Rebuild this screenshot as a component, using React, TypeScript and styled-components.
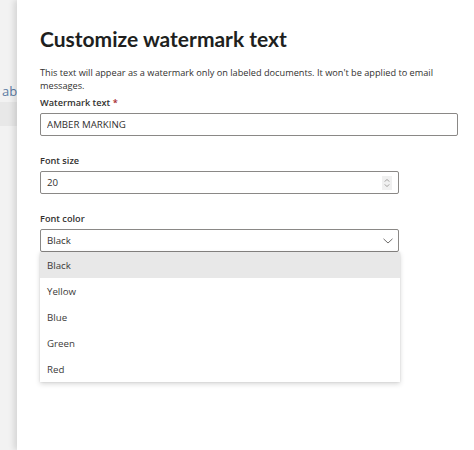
import React, { useState } from "react";
import styled, { createGlobalStyle } from "styled-components";

const GlobalStyle = createGlobalStyle`
    html, body {
        margin: 0;
        padding: 0;
        background: #ffffff;
    }
    body {
        font-family: "Open Sans", "Noto Sans", sans-serif;
        color: #323130;
    }
`;

const COLORS = ["Black", "Yellow", "Blue", "Green", "Red"];

const App = () => {
    const [color, setColor] = useState("Black");

    return (
        <>
            <GlobalStyle />
            <Page>
                <Backdrop>
                    <BackdropLabel>ab</BackdropLabel>
                    <BackdropRow />
                </Backdrop>
                <Panel>
                    <Title>Customize watermark text</Title>
                    <Description>
                        This text will appear as a watermark only on labeled documents. It won't be applied to email
                        messages.
                    </Description>

                    <Field>
                        <Label>
                            Watermark text <Required>*</Required>
                        </Label>
                        <TextBox defaultValue="AMBER MARKING" />
                    </Field>

                    <Field $gap>
                        <Label>Font size</Label>
                        <BoxShell>
                            <BoxValue>20</BoxValue>
                            <Stepper>
                                <svg width="8" height="12" viewBox="0 0 8 12">
                                    <path d="M1.8 4.6 L4 2.4 L6.2 4.6" fill="none" stroke="#8a8886" strokeWidth="0.8" />
                                    <path d="M1.8 7.4 L4 9.6 L6.2 7.4" fill="none" stroke="#8a8886" strokeWidth="0.8" />
                                </svg>
                            </Stepper>
                        </BoxShell>
                    </Field>

                    <Field $gap>
                        <Label>Font color</Label>
                        <DropdownWrap>
                            <BoxShell>
                                <BoxValue>{color}</BoxValue>
                                <Chevron>
                                    <svg width="10" height="6" viewBox="0 0 10 6">
                                        <path d="M0.5 0.8 L5 5 L9.5 0.8" fill="none" stroke="#605e5c" strokeWidth="0.9" />
                                    </svg>
                                </Chevron>
                            </BoxShell>
                            <Menu>
                                {COLORS.map((c) => (
                                    <MenuItem key={c} $selected={c === color} onClick={() => setColor(c)}>
                                        {c}
                                    </MenuItem>
                                ))}
                            </Menu>
                        </DropdownWrap>
                    </Field>
                </Panel>
            </Page>
        </>
    );
};

const Page = styled.div`
    display: flex;
    width: 474px;
    height: 450px;
    overflow: hidden;
`;

const Backdrop = styled.div`
    width: 17px;
    flex-shrink: 0;
    background: #f2f2f2;
    padding-top: 81px;
    overflow: hidden;
`;

const BackdropLabel = styled.div`
    font-size: 13px;
    line-height: 20px;
    color: #5b7aa3;
    padding-left: 2px;
    height: 21px;
`;

const BackdropRow = styled.div`
    height: 24px;
    background: #e8e8e8;
`;

const Panel = styled.div`
    flex: 1;
    background: #ffffff;
    box-shadow: -3px 0 6px rgba(0, 0, 0, 0.12);
    padding: 24px 0 0 23px;
    position: relative;
`;

const Title = styled.h1`
    margin: 0;
    font-family: Lato, "Open Sans", sans-serif;
    font-size: 21px;
    font-weight: 700;
    line-height: 30px;
    color: #201f1e;
`;

const Description = styled.p`
    margin: 11.5px 0 0;
    font-size: 9.2px;
    line-height: 13px;
    width: 420px;
    color: #323130;
`;

const Field = styled.div<{ $gap?: boolean }>`
    margin-top: ${(p) => (p.$gap ? "18px" : "4.5px")};
    display: flex;
    flex-direction: column;
`;

const Label = styled.label`
    font-size: 9.2px;
    font-weight: 600;
    line-height: 14px;
    margin-bottom: 3px;
    color: #323130;
`;

const Required = styled.span`
    color: #a4262c;
`;

const TextBox = styled.input`
    box-sizing: border-box;
    width: 418px;
    height: 23px;
    margin: 0;
    border: 1px solid #8a8886;
    border-radius: 2px;
    padding: 0 6px;
    font-family: "Open Sans", "Noto Sans", sans-serif;
    font-size: 9.7px;
    color: #323130;
    outline: none;
`;

const BoxShell = styled.div`
    box-sizing: border-box;
    width: 359px;
    height: 23px;
    border: 1px solid #8a8886;
    border-radius: 2px;
    padding: 0 4px 0 6px;
    display: flex;
    align-items: center;
    justify-content: space-between;
    background: #ffffff;
`;

const BoxValue = styled.span`
    font-size: 9.7px;
    color: #323130;
`;

const Stepper = styled.span`
    width: 10px;
    height: 14px;
    margin-right: 2px;
    background: #f0f0f0;
    display: flex;
    align-items: center;
    justify-content: center;
`;

const Chevron = styled.span`
    display: flex;
    align-items: center;
    margin-right: 1px;
`;

const DropdownWrap = styled.div`
    position: relative;
`;

const Menu = styled.div`
    position: absolute;
    top: 23px;
    left: 0;
    width: 360px;
    background: #ffffff;
    box-shadow: 0 2px 5px rgba(0, 0, 0, 0.16), 0 0 2px rgba(0, 0, 0, 0.1);
    z-index: 2;
`;

const MenuItem = styled.div<{ $selected?: boolean }>`
    height: 26px;
    display: flex;
    align-items: center;
    padding-left: 7px;
    padding-top: 1px;
    box-sizing: border-box;
    font-size: 9.7px;
    color: #3b3a39;
    background: ${(p) => (p.$selected ? "#e8e8e8" : "#ffffff")};
    cursor: pointer;
`;

export default App;
